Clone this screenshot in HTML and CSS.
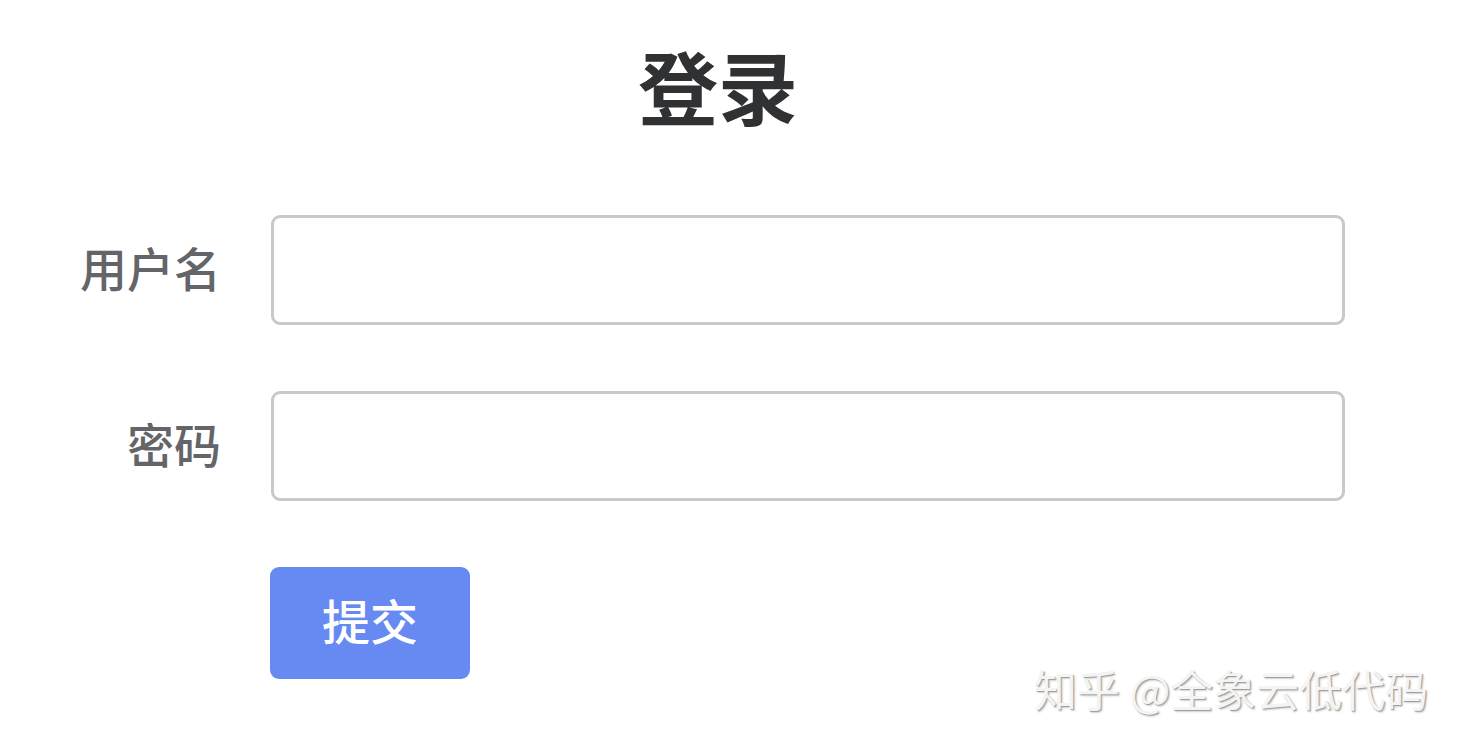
FILE: index.html
```html
<!DOCTYPE html>
<html lang="zh">
<head>
<meta charset="utf-8">
<title>登录</title>
<link rel="stylesheet" href="styles.css">
</head>
<body>
<div class="page">
  <h1 class="title">登录</h1>
  <form class="form">
    <div class="row">
      <label class="label">用户名</label>
      <div class="input"></div>
    </div>
    <div class="row">
      <label class="label">密码</label>
      <div class="input"></div>
    </div>
    <div class="row">
      <span class="label"></span>
      <button type="button" class="btn">提交</button>
    </div>
  </form>
  <div class="watermark">知乎 @全象云低代码</div>
</div>
</body>
</html>
```
FILE: styles.css
```css
html, body {
  margin: 0;
  padding: 0;
  background: #fff;
}
body {
  font-family: "Noto Sans CJK SC", "Noto Sans", sans-serif;
  width: 1470px;
  height: 752px;
  overflow: hidden;
}
.page {
  position: relative;
  width: 1470px;
  height: 752px;
}
.title {
  margin: 0;
  padding-top: 28px;
  width: 1436px;
  text-align: center;
  font-size: 80px;
  line-height: 112px;
  font-weight: 700;
  color: #303133;
}
.form {
  margin-top: 75px;
  display: flex;
  flex-direction: column;
  gap: 66px;
}
.row {
  display: flex;
  align-items: center;
  gap: 50px;
}
.label {
  width: 221px;
  flex: none;
  text-align: right;
  font-size: 47px;
  font-weight: 500;
  color: #636569;
  line-height: 104px;
  padding-bottom: 6px;
}
.input {
  width: 1068px;
  height: 104px;
  border: 3px solid #c8c9cf;
  border-radius: 9px;
  background: #fff;
}
.btn {
  width: 200px;
  height: 112px;
  margin-left: -1px;
  border: none;
  border-radius: 9px;
  background: #6689f2;
  color: #fff;
  font-family: "Noto Sans CJK SC", "Noto Sans", sans-serif;
  font-size: 48px;
  font-weight: 500;
  padding: 0 0 8px 0;
}
.watermark {
  position: absolute;
  left: 1034px;
  top: 659px;
  font-size: 43px;
  line-height: 58px;
  color: #f4f4f4;
  text-shadow: 1px 1px 1px #9a9a9a, 2px 2px 2px rgba(0,0,0,0.15);
  white-space: nowrap;
}
```
